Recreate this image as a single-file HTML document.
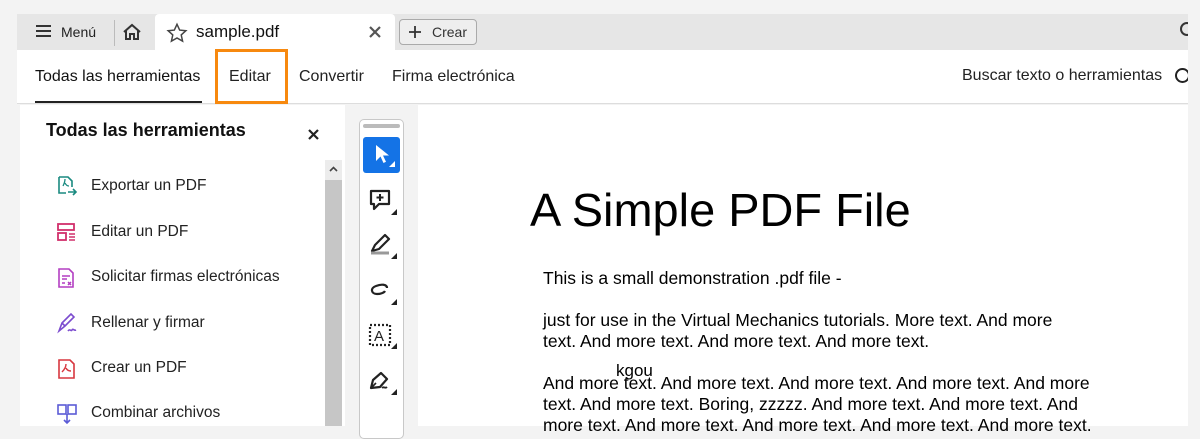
<!DOCTYPE html>
<html><head><meta charset="utf-8"><style>
*{margin:0;padding:0;box-sizing:border-box}
body{width:1200px;height:426px;overflow:hidden;background:#f3f3f3;font-family:"Liberation Sans",Arial,sans-serif;position:relative;color:#222}
.abs{position:absolute}
</style></head><body>
<!-- tab bar -->
<div class="abs" style="left:17px;top:14px;width:1171px;height:36px;background:#e6e6e6"></div>
<div class="abs" style="left:36px;top:25px;width:15px;height:2px;background:#333;box-shadow:0 5px 0 #333,0 10px 0 #333"></div>
<div class="abs" style="left:61px;top:24px;font-size:14px;color:#222">Menú</div>
<div class="abs" style="left:114px;top:20px;width:1px;height:26px;background:#bbb"></div>
<svg class="abs" style="left:121px;top:22px" width="22" height="20" viewBox="0 0 22 20"><path d="M3 10l8-7 8 7M5 8.5V17h4v-5h4v5h4V8.5" fill="none" stroke="#333" stroke-width="2"/></svg>
<div class="abs" style="left:155px;top:14px;width:240px;height:36px;background:#fff;border-radius:4px 4px 0 0"></div>
<svg class="abs" style="left:166px;top:22px" width="22" height="22" viewBox="0 0 24 24"><path d="M12 2.5l2.9 6.3 6.8.7-5.1 4.6 1.5 6.8L12 17.4 5.9 20.9l1.5-6.8L2.3 9.5l6.8-.7z" fill="none" stroke="#444" stroke-width="1.6"/></svg>
<div class="abs" style="left:196px;top:22px;font-size:17px;color:#111">sample.pdf</div>
<svg class="abs" style="left:369px;top:26px" width="12" height="12" viewBox="0 0 12 12"><path d="M1 1l10 10M11 1L1 11" stroke="#555" stroke-width="2.2"/></svg>
<div class="abs" style="left:399px;top:19px;width:78px;height:26px;border:1px solid #aaa;border-radius:4px;background:#eee"></div>
<svg class="abs" style="left:408px;top:25px" width="14" height="14" viewBox="0 0 14 14"><path d="M7 1v12M1 7h12" stroke="#333" stroke-width="1.8"/></svg>
<div class="abs" style="left:432px;top:24px;font-size:14px;color:#333">Crear</div>
<div class="abs" style="left:1180px;top:22px;width:14px;height:14px;border:2px solid #333;border-radius:50%"></div>
<!-- toolbar -->
<div class="abs" style="left:17px;top:50px;width:1171px;height:54px;background:#fff;border-bottom:1px solid #ddd"></div>
<div class="abs" style="left:35px;top:68px;font-size:16px;color:#111">Todas las herramientas</div>
<div class="abs" style="left:35px;top:101px;width:167px;height:2px;background:#222"></div>
<div class="abs" style="left:215px;top:49px;width:73px;height:55px;border:3px solid #f7890f"></div>
<div class="abs" style="left:229px;top:68px;font-size:16px;color:#222">Editar</div>
<div class="abs" style="left:299px;top:68px;font-size:16px;color:#222">Convertir</div>
<div class="abs" style="left:392px;top:68px;font-size:16px;color:#222">Firma electrónica</div>
<div class="abs" style="left:962px;top:67px;font-size:16px;color:#222">Buscar texto o herramientas</div>
<div class="abs" style="left:1175px;top:68px;width:15px;height:15px;border:2px solid #222;border-radius:50%"></div>
<div class="abs" style="left:1188px;top:14px;width:12px;height:412px;background:#f3f3f3"></div>
<!-- left panel -->
<div class="abs" style="left:20px;top:105px;width:325px;height:321px;background:#fff"></div>
<div class="abs" style="left:46px;top:120px;font-size:18px;font-weight:bold;color:#111">Todas las herramientas</div>
<svg class="abs" style="left:308px;top:129px" width="11" height="11" viewBox="0 0 11 11"><path d="M1 1l9 9M10 1L1 10" stroke="#222" stroke-width="2.2"/></svg>
<div class="abs" style="left:325px;top:160px;width:17px;height:266px;background:#ececec"></div>
<div class="abs" style="left:325px;top:180px;width:17px;height:246px;background:#c6c6c6"></div>
<svg class="abs" style="left:328px;top:164px" width="11" height="10" viewBox="0 0 11 10"><path d="M2 7l3.5-3.5L9 7" fill="none" stroke="#444" stroke-width="1.6"/></svg>
<div style="font-size:15.5px;color:#222">
<svg class="abs" style="left:56px;top:175px" width="22" height="22" viewBox="0 0 22 22"><path d="M3 2h9l4 4v6M3 2v16h7" fill="none" stroke="#1a8a80" stroke-width="1.6"/><path d="M7 11c1-2 2-5 2-7M9 8c1 2 2 3 4 3" fill="none" stroke="#1a8a80" stroke-width="1.3"/><path d="M12 17h8m-3-3l3 3-3 3" fill="none" stroke="#1a8a80" stroke-width="1.6"/></svg>
<div class="abs" style="left:91px;top:177px">Exportar un PDF</div>
<svg class="abs" style="left:56px;top:222px" width="22" height="22" viewBox="0 0 22 22"><rect x="2" y="2" width="16" height="6" fill="none" stroke="#d1306b" stroke-width="1.8"/><rect x="2" y="11" width="8" height="7" fill="none" stroke="#d1306b" stroke-width="1.8"/><path d="M13 12h6M13 15h6M13 18h6" stroke="#d1306b" stroke-width="1.6"/></svg>
<div class="abs" style="left:91px;top:223px">Editar un PDF</div>
<svg class="abs" style="left:56px;top:267px" width="22" height="22" viewBox="0 0 22 22"><path d="M3 2h10l4 4v14H3z" fill="none" stroke="#b33fc2" stroke-width="1.6"/><path d="M6 9h8M6 12h5M6 16h3M12 15l3 3m0-3l-3 3" stroke="#b33fc2" stroke-width="1.5"/></svg>
<div class="abs" style="left:91px;top:268px">Solicitar firmas electrónicas</div>
<svg class="abs" style="left:56px;top:312px" width="22" height="22" viewBox="0 0 22 22"><path d="M3 19l3-8 9-9 3 3-9 9zM6 11l3 3M12 19c2-3 3 1 4-1s2 1 4 0" fill="none" stroke="#7c4ccf" stroke-width="1.6"/></svg>
<div class="abs" style="left:91px;top:314px">Rellenar y firmar</div>
<svg class="abs" style="left:56px;top:358px" width="22" height="22" viewBox="0 0 22 22"><path d="M3 2h11l4 4v14H3z" fill="none" stroke="#d7373f" stroke-width="1.6"/><path d="M10 6c0 4-3 7-4 8M10 10c1 2 3 3 5 3" fill="none" stroke="#d7373f" stroke-width="1.4"/></svg>
<div class="abs" style="left:91px;top:359px">Crear un PDF</div>
<svg class="abs" style="left:56px;top:403px" width="22" height="22" viewBox="0 0 22 22"><rect x="2" y="2" width="8" height="9" fill="none" stroke="#5b5bd6" stroke-width="1.6"/><rect x="12" y="2" width="8" height="9" fill="none" stroke="#5b5bd6" stroke-width="1.6"/><path d="M11 11v9m-3-3l3 3 3-3" fill="none" stroke="#5b5bd6" stroke-width="1.6"/></svg>
<div class="abs" style="left:91px;top:404px">Combinar archivos</div>
</div>
<!-- vertical tools -->
<div class="abs" style="left:359px;top:119px;width:45px;height:320px;background:#fff;border:1px solid #c8c8c8;border-radius:5px"></div>
<div class="abs" style="left:363px;top:124px;width:37px;height:4px;background:#bbb;border-radius:2px"></div>
<div class="abs" style="left:363px;top:137px;width:37px;height:36px;background:#1473e6;border-radius:3px"></div>
<svg class="abs" style="left:372px;top:143px" width="24" height="26" viewBox="0 0 24 26"><path d="M4 2v16l4.5-4.5 3 6.5 2.5-1.2-3-6.3h6z" fill="#fff"/><path d="M23 18v6h-6z" fill="#fff"/></svg>
<svg class="abs" style="left:367px;top:188px" width="32" height="30" viewBox="0 0 32 30"><path d="M4 3h18v13H12l-5 5v-5H4z" fill="none" stroke="#222" stroke-width="2.2" stroke-linejoin="round"/><path d="M13 6v7M9.5 9.5h7" stroke="#222" stroke-width="2"/><path d="M30 21v6h-6z" fill="#222"/></svg>
<svg class="abs" style="left:367px;top:232px" width="32" height="30" viewBox="0 0 32 30"><path d="M5 19l3-6 10-10 4 4-10 10z" fill="none" stroke="#222" stroke-width="2.2" stroke-linejoin="round"/><path d="M4 21h18" stroke="#999" stroke-width="3"/><path d="M30 21v6h-6z" fill="#222"/></svg>
<svg class="abs" style="left:367px;top:278px" width="32" height="30" viewBox="0 0 32 30"><path d="M20 10c0-4-6-4-11-2-6 2-5 8 1 8 3 0 7-1 8-3" fill="none" stroke="#222" stroke-width="2.2"/><path d="M30 21v6h-6z" fill="#222"/></svg>
<svg class="abs" style="left:367px;top:322px" width="32" height="30" viewBox="0 0 32 30"><rect x="3" y="3" width="20" height="20" fill="none" stroke="#222" stroke-width="2.2" stroke-dasharray="2 2"/><text x="7" y="19" font-size="15" font-family="Liberation Sans" fill="#222">A</text><path d="M30 21v6h-6z" fill="#222"/></svg>
<svg class="abs" style="left:367px;top:368px" width="32" height="30" viewBox="0 0 32 30"><path d="M4 20l2-8 8-7 6 6-7 8z" fill="none" stroke="#222" stroke-width="2.2" stroke-linejoin="round"/><path d="M4 20l5-5" stroke="#222" stroke-width="1.6"/><path d="M15 20c2-2 3 1 5-1" fill="none" stroke="#222" stroke-width="1.8"/><path d="M30 21v6h-6z" fill="#222"/></svg>
<!-- page -->
<div class="abs" style="left:418px;top:105px;width:770px;height:321px;background:#fff"></div>
<div class="abs" style="left:530px;top:183px;font-size:46px;color:#000;white-space:nowrap;transform:scaleX(1.02);transform-origin:left">A Simple PDF File</div>
<div class="abs" style="left:543px;top:268px;font-size:17.5px;line-height:21px;color:#000;white-space:nowrap">
<div>This is a small demonstration .pdf file -</div>
<div style="margin-top:21px">just for use in the Virtual Mechanics tutorials. More text. And more</div>
<div>text. And more text. And more text. And more text.</div>
<div style="margin-top:21px">And more text. And more text. And more text. And more text. And more</div>
<div>text. And more text. Boring, zzzzz. And more text. And more text. And</div>
<div>more text. And more text. And more text. And more text. And more text.</div>
</div>
<div class="abs" style="left:616px;top:361px;font-size:17px;color:#000">kgou</div>
</body></html>
